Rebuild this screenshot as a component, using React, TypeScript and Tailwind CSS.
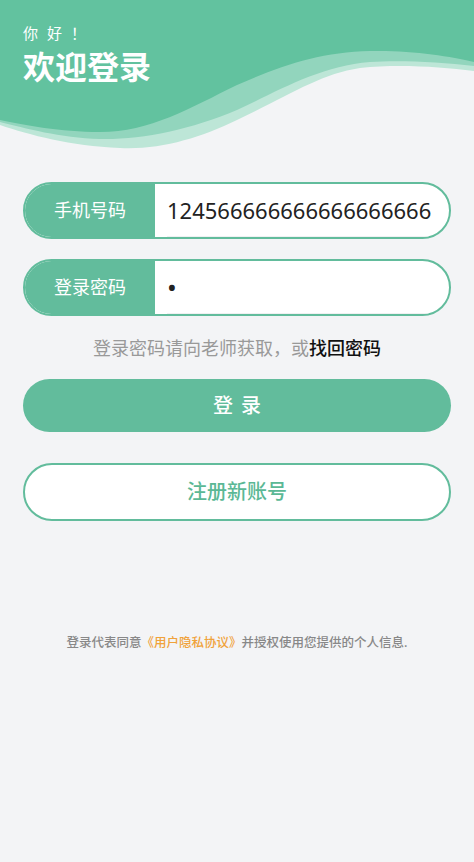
import { useState } from "react";

const font = { fontFamily: '"Noto Sans", "Noto Sans CJK SC", sans-serif' };

function HeaderWave() {
  return (
    <svg
      className="absolute inset-0 h-full w-full"
      viewBox="0 0 474 150"
      preserveAspectRatio="none"
      aria-hidden
    >
      <path
        d="M0 0 H474 V71 C440 67 400 64 360 68 C320 74 290 95 237 120 C200 138 160 150 120 148 C70 146 30 135 0 125 Z"
        fill="#bde6d7"
      />
      <path
        d="M0 0 H474 V66 C440 62 400 60 370 62 C320 66 280 90 237 110 C190 130 140 140 100 139 C60 138 25 128 0 122 Z"
        fill="#92d5bd"
      />
      <path
        d="M0 0 H474 V62 C450 56 410 50 370 51 C320 52 280 66 237 85 C190 108 150 132 100 132 C60 132 25 125 0 120 Z"
        fill="#62c29f"
      />
    </svg>
  );
}

function Field({ label, children }: { label: string; children: React.ReactNode }) {
  return (
    <div className="flex h-[57px] overflow-hidden rounded-full border-2 border-[#62bc9c] bg-white">
      <div className="flex w-[130px] shrink-0 items-center justify-center bg-[#62bc9c] text-[18px] text-white">
        {label}
      </div>
      <div className="flex min-w-0 flex-1 items-center pl-[12px] pr-[14px]">
        <div className="flex h-full w-full items-center border-b border-[#f0f0f2]">{children}</div>
      </div>
    </div>
  );
}

export default function App() {
  const [phone, setPhone] = useState("124566666666666666666");
  const [password, setPassword] = useState("1");

  return (
    <main className="min-h-[862px] w-full bg-[#f3f4f6]" style={font}>
      <header className="relative h-[150px]">
        <HeaderWave />
        <div className="relative px-[23px] pt-[22px] text-white">
          <p className="text-[15px] tracking-[9px]">你好！</p>
          <h1 className="mt-[2px] text-[32px] font-bold leading-[40px]">欢迎登录</h1>
        </div>
      </header>

      <section className="mt-[32px] flex flex-col gap-[20px] px-[23px]">
        <Field label="手机号码">
          <input
            value={phone}
            onChange={(event) => setPhone(event.target.value)}
            className="w-full bg-transparent text-[22px] text-[#222] outline-none"
            aria-label="手机号码"
          />
        </Field>
        <Field label="登录密码">
          <input
            type="password"
            value={password}
            onChange={(event) => setPassword(event.target.value)}
            className="w-full bg-transparent text-[26px] text-[#222] outline-none"
            aria-label="登录密码"
          />
        </Field>
      </section>

      <p className="mt-[20px] text-center text-[18px] leading-[24px] text-[#999]">
        登录密码请向老师获取，或<span className="font-medium text-[#111]">找回密码</span>
      </p>

      <div className="mt-[19px] flex flex-col gap-[31px] px-[23px]">
        <button className="h-[53px] rounded-full bg-[#62bc9c] pl-[8px] text-[20px] font-medium tracking-[8px] text-white">
          登录
        </button>
        <button className="h-[58px] rounded-full border-2 border-[#62bc9c] bg-white text-[20px] font-medium text-[#5bb895]">
          注册新账号
        </button>
      </div>

      <p className="mt-[113px] text-center text-[12.5px] font-medium text-[#888]">
        登录代表同意<span className="text-[#f0a23a]">《用户隐私协议》</span>并授权使用您提供的个人信息.
      </p>
    </main>
  );
}
